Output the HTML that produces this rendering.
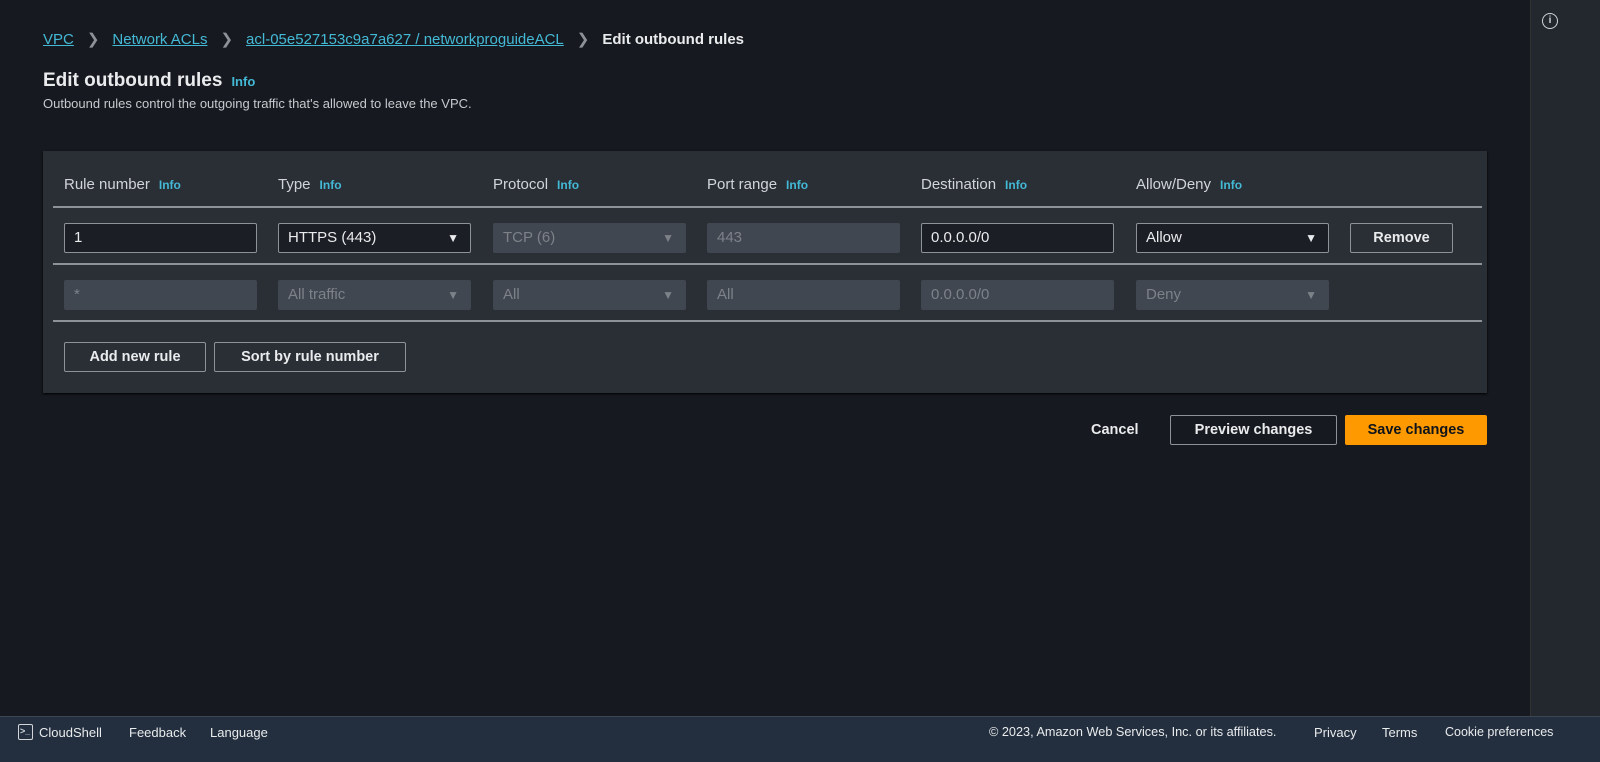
<!DOCTYPE html>
<html><head><style>
*{box-sizing:border-box;margin:0;padding:0}
body{width:1600px;height:762px;background:#16191f;font-family:"Liberation Sans",sans-serif;color:#d1d5db;position:relative;overflow:hidden;font-size:14px}
.a{position:absolute;white-space:nowrap}
.link{color:#44b9d6;text-decoration:underline}
.info{color:#44b9d6;font-weight:bold;font-size:12px;margin-left:9px}
.panel{position:absolute;left:43px;top:151px;width:1444px;height:242px;background:#2a2e35;box-shadow:0 1px 2px #000}
.line{position:absolute;left:53px;width:1429px;height:2px;background:#8d9299}
.hd{position:absolute;top:176px;font-size:15px;color:#d1d5db}
.in{position:absolute;width:193px;height:30px;border:1px solid #8d9299;background:#1b1e25;color:#e9ebed;font-size:15px;padding:5px 9px;border-radius:2px}
.dis{background:#414750;border-color:#414750;color:#7d8289}
.ar{position:absolute;right:11px;top:7px;font-size:12px}
.btn{position:absolute;height:30px;border:1px solid #8d9299;border-radius:2px;color:#e9ebed;font-weight:bold;font-size:14.5px;text-align:center;line-height:28px}
</style></head><body>
<div class="a" style="left:1530px;top:0;width:70px;height:716px;background:#23272e;border-left:1px solid #333"></div>
<div class="a" style="left:1542px;top:13px;width:16px;height:16px;border:1.5px solid #d1d5db;border-radius:50%;font-size:10px;font-weight:bold;text-align:center;line-height:13px;color:#d1d5db">i</div>

<div class="a" style="left:43px;top:30px;font-size:15px"><span class="link">VPC</span><span style="color:#8d9299;margin:0 13px">&#x276F;</span><span class="link">Network ACLs</span><span style="color:#8d9299;margin:0 13px">&#x276F;</span><span class="link">acl-05e527153c9a7a627 / networkproguideACL</span><span style="color:#8d9299;margin:0 13px">&#x276F;</span><b style="color:#e9ebed">Edit outbound rules</b></div>
<div class="a" style="left:43px;top:70px;font-size:19px;font-weight:bold;color:#e9ebed">Edit outbound rules<span class="info" style="font-size:13px">Info</span></div>
<div class="a" style="left:43px;top:96px;font-size:13px;color:#c6c9cd">Outbound rules control the outgoing traffic that's allowed to leave the VPC.</div>

<div class="panel"></div>
<div class="hd" style="left:64px">Rule number<span class="info">Info</span></div>
<div class="hd" style="left:278px">Type<span class="info">Info</span></div>
<div class="hd" style="left:493px">Protocol<span class="info">Info</span></div>
<div class="hd" style="left:707px">Port range<span class="info">Info</span></div>
<div class="hd" style="left:921px">Destination<span class="info">Info</span></div>
<div class="hd" style="left:1136px">Allow/Deny<span class="info">Info</span></div>
<div class="line" style="top:206px"></div>
<div class="line" style="top:263px"></div>
<div class="line" style="top:320px"></div>

<div class="in" style="left:64px;top:223px">1</div>
<div class="in" style="left:278px;top:223px">HTTPS (443)<span class="ar">&#9660;</span></div>
<div class="in dis" style="left:493px;top:223px">TCP (6)<span class="ar">&#9660;</span></div>
<div class="in dis" style="left:707px;top:223px">443</div>
<div class="in" style="left:921px;top:223px">0.0.0.0/0</div>
<div class="in" style="left:1136px;top:223px">Allow<span class="ar">&#9660;</span></div>
<div class="btn" style="left:1350px;top:223px;width:103px">Remove</div>

<div class="in dis" style="left:64px;top:280px">*</div>
<div class="in dis" style="left:278px;top:280px">All traffic<span class="ar">&#9660;</span></div>
<div class="in dis" style="left:493px;top:280px">All<span class="ar">&#9660;</span></div>
<div class="in dis" style="left:707px;top:280px">All</div>
<div class="in dis" style="left:921px;top:280px">0.0.0.0/0</div>
<div class="in dis" style="left:1136px;top:280px">Deny<span class="ar">&#9660;</span></div>

<div class="btn" style="left:64px;top:342px;width:142px">Add new rule</div>
<div class="btn" style="left:214px;top:342px;width:192px">Sort by rule number</div>

<div class="a" style="left:1091px;top:422px;font-weight:bold;color:#e9ebed;font-size:14.5px">Cancel</div>
<div class="btn" style="left:1170px;top:415px;width:167px">Preview changes</div>
<div class="btn" style="left:1345px;top:415px;width:142px;background:#ff9900;border-color:#ff9900;color:#0f141a">Save changes</div>

<div class="a" style="left:0;top:716px;width:1600px;height:46px;background:#232f3e;border-top:1px solid #3c4552"></div>
<div class="a" style="left:18px;top:724px;width:15px;height:16px;border:1.5px solid #d1d5db;border-radius:2px;font-size:9px;line-height:12px;padding-left:1px;font-weight:bold">&gt;_</div>
<div class="a" style="left:39px;top:725px;font-size:13px;color:#e9ebed">CloudShell</div>
<div class="a" style="left:129px;top:725px;font-size:13px;color:#e9ebed">Feedback</div>
<div class="a" style="left:210px;top:725px;font-size:13px;color:#e9ebed">Language</div>
<div class="a" style="left:989px;top:725px;font-size:12.7px;color:#e9ebed">© 2023, Amazon Web Services, Inc. or its affiliates.</div>
<div class="a" style="left:1314px;top:725px;font-size:13px;color:#e9ebed">Privacy</div>
<div class="a" style="left:1382px;top:725px;font-size:13px;color:#e9ebed">Terms</div>
<div class="a" style="left:1445px;top:725px;font-size:12.5px;color:#e9ebed">Cookie preferences</div>
</body></html>
